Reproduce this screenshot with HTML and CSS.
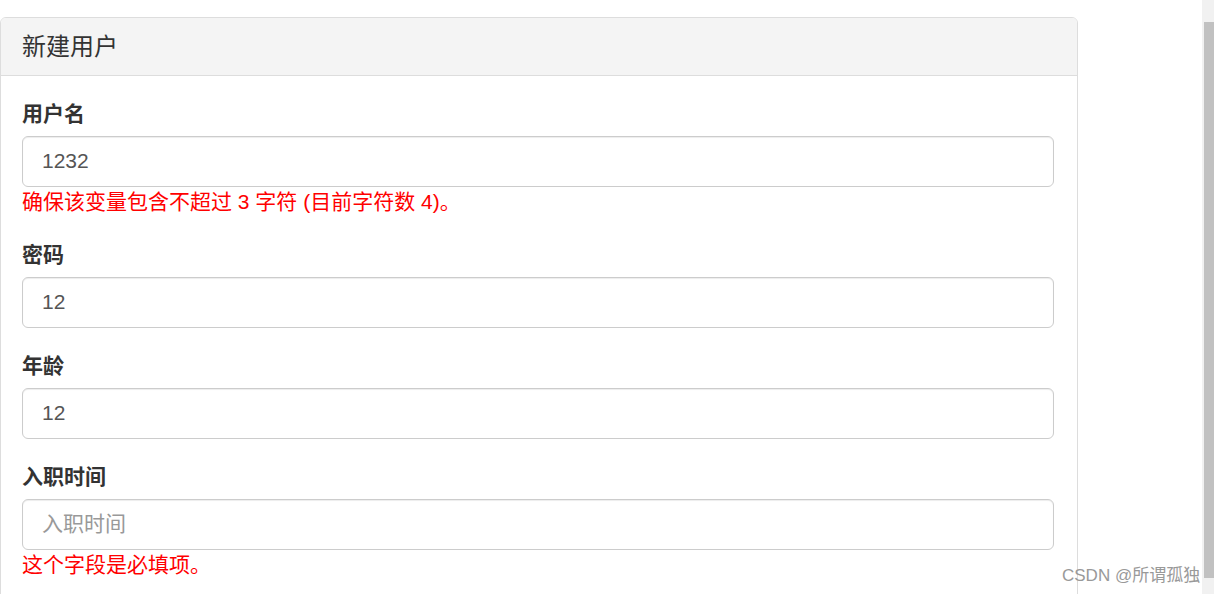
FILE: index.html
```html
<!DOCTYPE html>
<html lang="zh-CN">
<head>
<meta charset="utf-8">
<title>新建用户</title>
<link rel="stylesheet" href="styles.css">
</head>
<body>
<div class="page">
  <div class="panel">
    <div class="panel-heading"><h3 class="panel-title">新建用户</h3></div>
    <div class="panel-body">
      <form class="form">
        <div class="form-group">
          <label class="label">用户名</label>
          <input class="input" type="text" value="1232">
          <span class="error">确保该变量包含不超过 3 字符 (目前字符数 4)。</span>
        </div>
        <div class="form-group">
          <label class="label">密码</label>
          <input class="input" type="text" value="12">
        </div>
        <div class="form-group">
          <label class="label">年龄</label>
          <input class="input" type="text" value="12">
        </div>
        <div class="form-group">
          <label class="label">入职时间</label>
          <input class="input" type="text" placeholder="入职时间">
          <span class="error">这个字段是必填项。</span>
        </div>
      </form>
    </div>
  </div>
</div>
<div class="watermark">CSDN @所谓孤独</div>
<div class="scrollbar"><div class="thumb"></div></div>
</body>
</html>
```
FILE: styles.css
```css
html, body {
  margin: 0;
  padding: 0;
  height: 100%;
  overflow: hidden;
  background: #fff;
  font-family: "Liberation Sans", Arial, "Noto Sans CJK SC", sans-serif;
  color: #333;
}
.page {
  width: 1078px;
  padding-top: 17px;
}
.panel {
  border: 1px solid #ddd;
  border-radius: 6px;
  background: #fff;
  overflow: hidden;
}
.panel-heading {
  background: #f4f4f4;
  border-bottom: 1px solid #ddd;
  padding: 15px 21px;
  height: 27px;
}
.panel-title {
  margin: 0;
  font-size: 24px;
  font-weight: normal;
  line-height: 28px;
  color: #333;
}
.panel-body {
  padding: 22px 23px 0 21px;
}
.form-group {
  display: flex;
  flex-direction: column;
  margin-bottom: 22.5px;
}
.label {
  font-size: 21px;
  font-weight: bold;
  line-height: 31px;
  margin-bottom: 6.5px;
  color: #333;
}
.input {
  box-sizing: border-box;
  height: 51px;
  width: 100%;
  border: 1px solid #ccc;
  border-radius: 6px;
  padding: 9px 19px;
  font-family: "Liberation Sans", Arial, "Noto Sans CJK SC", sans-serif;
  font-size: 21px;
  color: #555;
  box-shadow: inset 0 1px 1px rgba(0,0,0,0.075);
  outline: none;
  margin: 0;
}
.input::placeholder {
  color: #999;
}
.error {
  color: #f00;
  font-size: 21px;
  line-height: 30px;
}
.watermark {
  position: absolute;
  left: 1062px;
  top: 564px;
  font-size: 17px;
  line-height: 24px;
  color: #999;
  white-space: nowrap;
}
.scrollbar {
  position: absolute;
  top: 0;
  right: 0;
  width: 12px;
  height: 594px;
  background: #f1f1f1;
}
.thumb {
  position: absolute;
  left: 2px;
  right: 0;
  top: 22px;
  height: 556px;
  background: #c1c1c1;
}
```
